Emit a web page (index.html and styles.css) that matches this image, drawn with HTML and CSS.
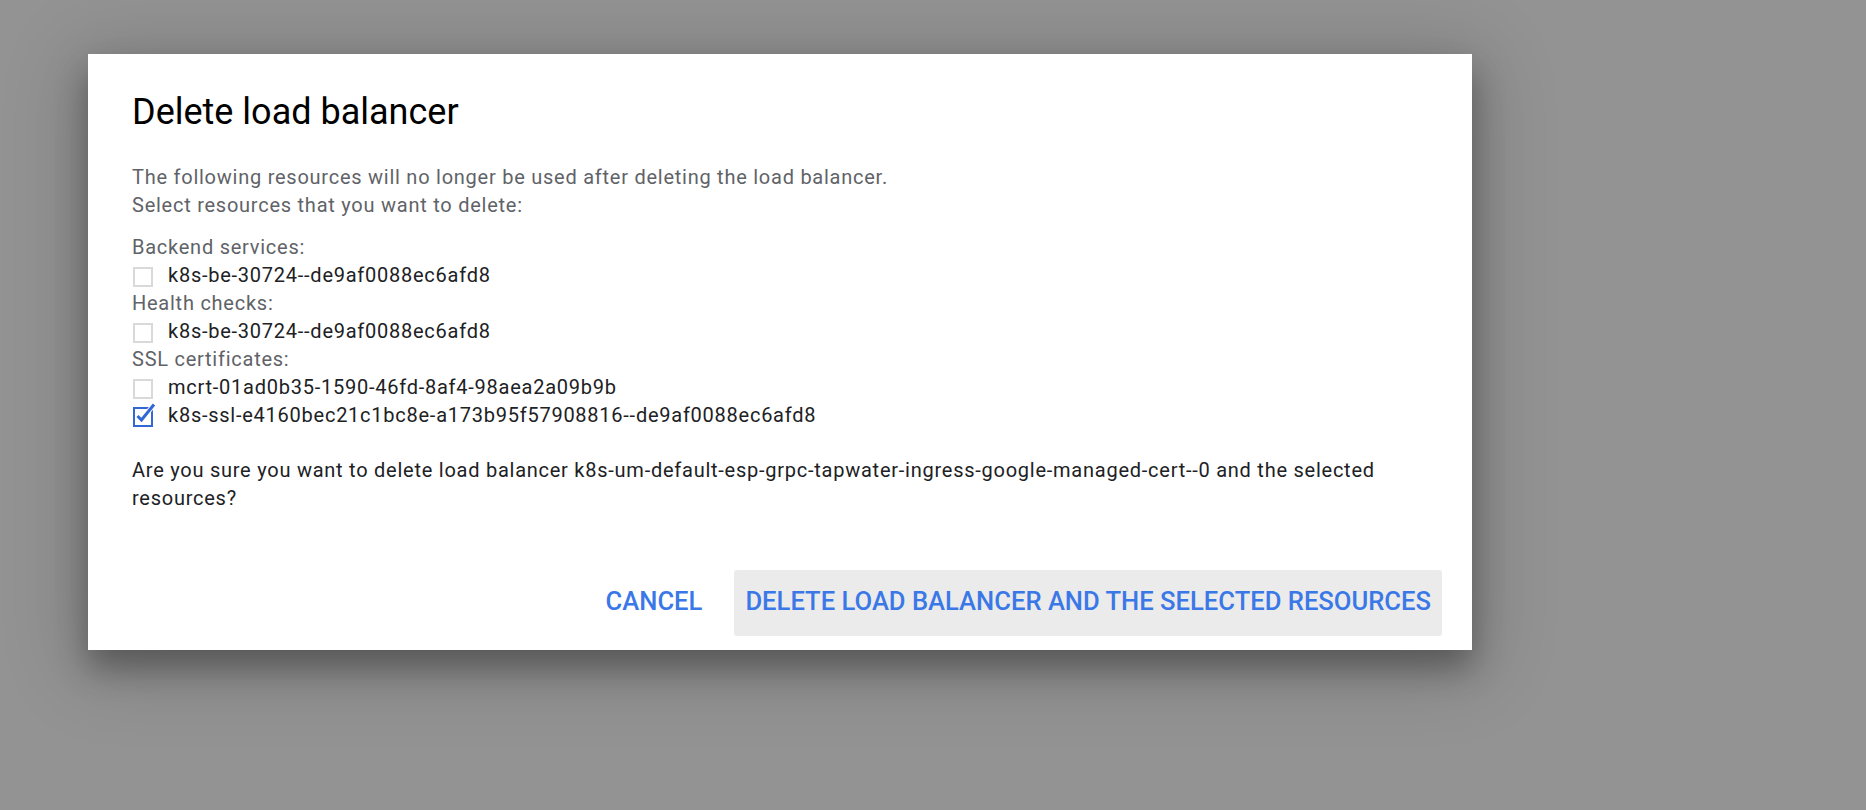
FILE: index.html
```html
<!DOCTYPE html>
<html>
<head>
<meta charset="utf-8">
<title>Delete load balancer</title>
<link rel="stylesheet" href="styles.css">
</head>
<body>
<div class="overlay">
  <div class="dialog">
    <h1 class="title">Delete load balancer</h1>
    <p class="intro">The following resources will no longer be used after deleting the load balancer.<br>Select resources that you want to delete:</p>
    <div class="groups">
      <div class="label">Backend services:</div>
      <label class="item"><span class="box"></span><span>k8s-be-30724--de9af0088ec6afd8</span></label>
      <div class="label">Health checks:</div>
      <label class="item"><span class="box"></span><span>k8s-be-30724--de9af0088ec6afd8</span></label>
      <div class="label">SSL certificates:</div>
      <label class="item"><span class="box"></span><span>mcrt-01ad0b35-1590-46fd-8af4-98aea2a09b9b</span></label>
      <label class="item"><span class="box checked"><svg viewBox="0 0 20 20" width="20" height="20"><rect x="1" y="1" width="18" height="18" fill="none" stroke="#3367d6" stroke-width="2"/><path d="M4.5 9 L8.5 13 L21 -2.5" fill="none" stroke="#ffffff" stroke-width="5"/><path d="M4.5 9 L8.5 13 L21 -2.5" fill="none" stroke="#3367d6" stroke-width="3"/></svg></span><span>k8s-ssl-e4160bec21c1bc8e-a173b95f57908816--de9af0088ec6afd8</span></label>
    </div>
    <p class="confirm">Are you sure you want to delete load balancer k8s-um-default-esp-grpc-tapwater-ingress-google-managed-cert--0 and the selected resources?</p>
    <div class="actions">
      <button class="btn">CANCEL</button>
      <button class="btn primary">DELETE LOAD BALANCER AND THE SELECTED RESOURCES</button>
    </div>
  </div>
</div>
</body>
</html>
```

FILE: styles.css
```css
html, body {
  margin: 0;
  padding: 0;
  height: 100%;
  background: #939393;
  font-family: Roboto, "Liberation Sans", Arial, sans-serif;
}
.overlay {
  padding: 54px 0 0 88px;
}
.dialog {
  width: 1384px;
  height: 596px;
  box-sizing: border-box;
  background: #ffffff;
  padding: 38px 30px 0 44px;
  box-shadow: 0 18px 30px rgba(0,0,0,0.30), 0 12px 70px 12px rgba(0,0,0,0.18);
  display: flex;
  flex-direction: column;
}
.title {
  margin: 0;
  font-size: 36px;
  line-height: 40px;
  font-weight: 400;
  color: #000000;
}
.intro {
  margin: 31px 0 0 0;
  font-size: 20px;
  letter-spacing: 0.75px;
  line-height: 28px;
  color: #5f6368;
}
.groups {
  margin-top: 14px;
  display: flex;
  flex-direction: column;
}
.label {
  font-size: 20px;
  letter-spacing: 0.75px;
  line-height: 28px;
  color: #5f6368;
}
.item {
  display: flex;
  align-items: center;
  font-size: 20px;
  letter-spacing: 0.75px;
  line-height: 28px;
  color: #202124;
}
.box {
  width: 20px;
  height: 20px;
  box-sizing: border-box;
  border: 2px solid #d9d9d9;
  margin: 4px 15px 0 1px;
  flex: none;
}
.box.checked {
  border: none;
}
.box svg {
  display: block;
  overflow: visible;
}
.confirm {
  margin: 27px 0 0 0;
  font-size: 20px;
  letter-spacing: 0.75px;
  line-height: 28px;
  color: #202124;
}
.actions {
  margin-top: 58px;
  display: flex;
  justify-content: flex-end;
  gap: 21px;
}
.btn {
  height: 66px;
  padding: 0 11px 4px 11px;
  border: none;
  border-radius: 3px;
  background: transparent;
  font-family: Roboto, "Liberation Sans", Arial, sans-serif;
  font-size: 25.6px;
  font-weight: 500;
  color: #3b78e7;
}
.btn.primary {
  background: #ebebeb;
}
```
